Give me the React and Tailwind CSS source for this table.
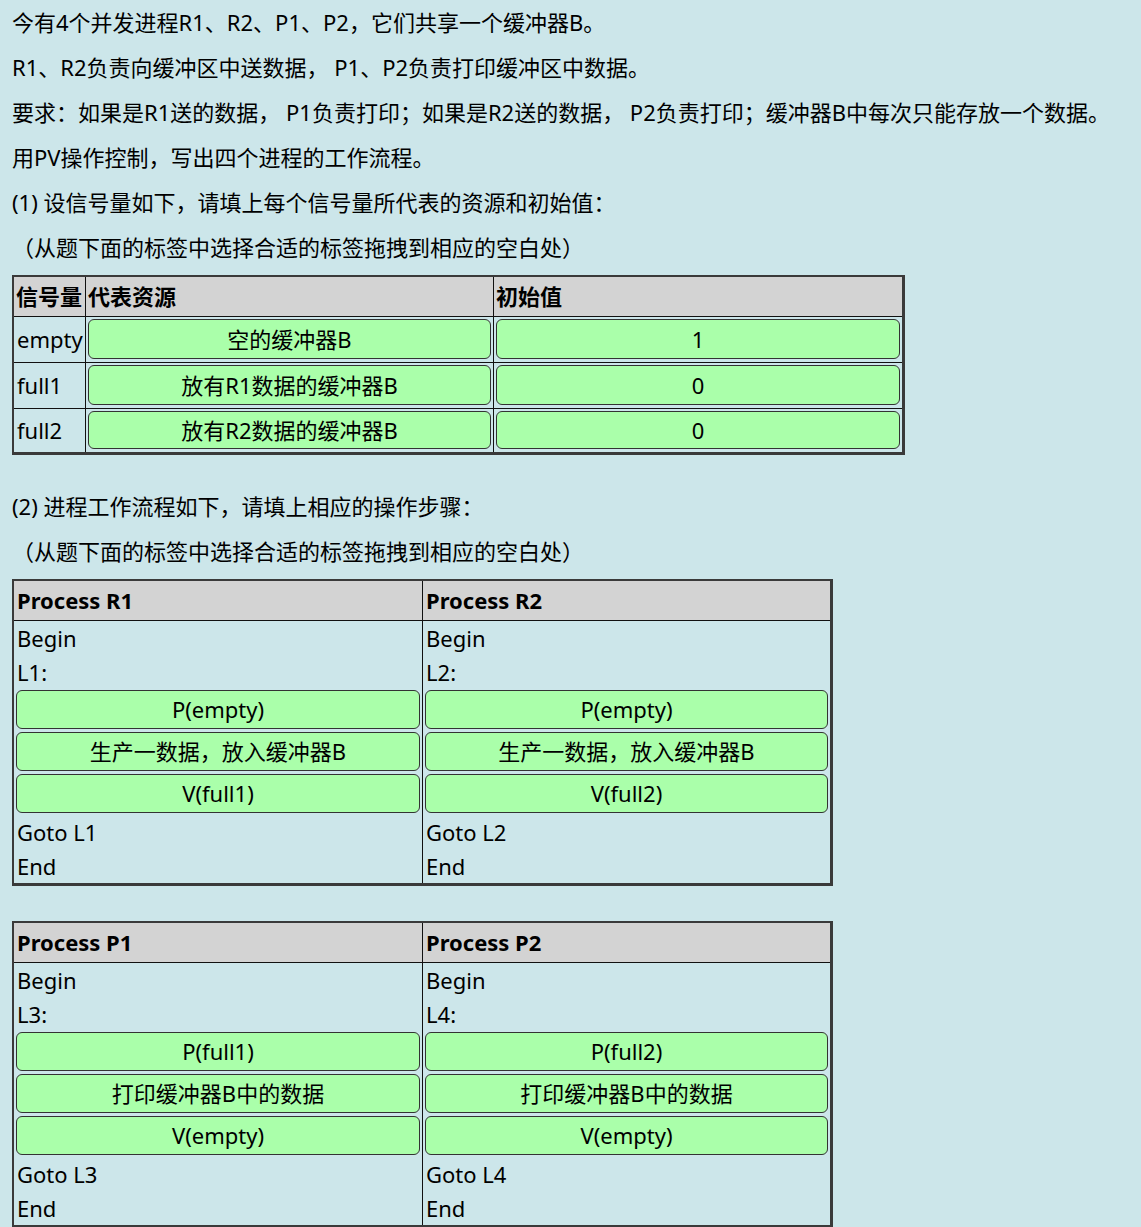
import React from 'react';

const font = { fontFamily: '"Noto Sans", "Noto Sans CJK SC", sans-serif' };

const Box = ({ children }) => (
    <div className="h-full rounded-[6px] border border-[#333] bg-[#aaffaa] flex items-center justify-center">
        {children}
    </div>
);

const Line = ({ children, className = '' }) => (
    <div className={`h-[45px] flex items-center ${className}`}>{children}</div>
);

const semaphores = [
    { name: 'empty', res: '空的缓冲器B', init: '1' },
    { name: 'full1', res: '放有R1数据的缓冲器B', init: '0' },
    { name: 'full2', res: '放有R2数据的缓冲器B', init: '0' },
];

const SemTable = () => (
    <div className="w-[893px] border-t-2 border-l-2 border-r-[3px] border-b-[3px] border-[#3a3a3a]">
        {/* Header */}
        <div className="flex h-[40px] bg-[#d3d3d3] border-b border-[#111] font-bold">
            <div className="w-[72px] border-r border-[#111] flex items-center pl-[2px]">信号量</div>
            <div className="w-[408px] border-r border-[#111] flex items-center pl-[2px]">代表资源</div>
            <div className="flex-1 flex items-center pl-[2px]">初始值</div>
        </div>
        {semaphores.map((s, i) => (
            <div
                key={s.name}
                className={`flex ${i < 2 ? 'h-[46px] border-b border-[#111]' : 'h-[43px]'}`}
            >
                <div className="w-[72px] border-r border-[#111] flex items-center pl-[3px]">{s.name}</div>
                <div className="w-[408px] border-r border-[#111] p-[2px] pb-[3px]">
                    <Box>{s.res}</Box>
                </div>
                <div className="flex-1 p-[2px] pb-[3px]">
                    <Box>{s.init}</Box>
                </div>
            </div>
        ))}
    </div>
);

const ProcCell = ({ label, steps, className = '' }) => (
    <div className={`px-[2px] ${className}`}>
        <div className="h-[34px] flex items-center pl-[1px]">Begin</div>
        <div className="h-[34px] flex items-center pl-[1px]">{label}:</div>
        {steps.map((st) => (
            <div key={st} className="h-[42px] pt-[1px] pb-[2px]">
                <Box>{st}</Box>
            </div>
        ))}
        <div className="h-[34px] flex items-center pl-[1px]">Goto {label}</div>
        <div className="h-[34px] flex items-center pl-[1px]">End</div>
    </div>
);

const ProcTable = ({ left, right }) => (
    <div className="w-[821px] border-t-2 border-l-2 border-r-[3px] border-b-[3px] border-[#3a3a3a]">
        <div className="flex h-[40px] bg-[#d3d3d3] border-b border-[#111] font-bold">
            <div className="w-[409px] border-r border-[#111] flex items-center pl-[3px]">{left.title}</div>
            <div className="flex-1 flex items-center pl-[3px]">{right.title}</div>
        </div>
        <div className="flex">
            <ProcCell label={left.label} steps={left.steps} className="w-[409px] border-r border-[#111]" />
            <ProcCell label={right.label} steps={right.steps} className="flex-1" />
        </div>
    </div>
);

export default function App() {
    return (
        <div className="min-h-screen bg-[#cce6ea] text-black text-[22px] pl-[12px]" style={font}>
            <Line>今有4个并发进程R1、R2、P1、P2，它们共享一个缓冲器B。</Line>
            <Line>R1、R2负责向缓冲区中送数据， P1、P2负责打印缓冲区中数据。</Line>
            <Line>要求：如果是R1送的数据， P1负责打印；如果是R2送的数据， P2负责打印；缓冲器B中每次只能存放一个数据。</Line>
            <Line>用PV操作控制，写出四个进程的工作流程。</Line>
            <Line>(1) 设信号量如下，请填上每个信号量所代表的资源和初始值：</Line>
            <Line>（从题下面的标签中选择合适的标签拖拽到相应的空白处）</Line>
            <div className="mt-[5px]">
                <SemTable />
            </div>
            <Line className="mt-[29px]">(2) 进程工作流程如下，请填上相应的操作步骤：</Line>
            <Line>（从题下面的标签中选择合适的标签拖拽到相应的空白处）</Line>
            <div className="mt-[5px] flex flex-col gap-[35px] pb-[1px]">
                <ProcTable
                    left={{ title: 'Process R1', label: 'L1', steps: ['P(empty)', '生产一数据，放入缓冲器B', 'V(full1)'] }}
                    right={{ title: 'Process R2', label: 'L2', steps: ['P(empty)', '生产一数据，放入缓冲器B', 'V(full2)'] }}
                />
                <ProcTable
                    left={{ title: 'Process P1', label: 'L3', steps: ['P(full1)', '打印缓冲器B中的数据', 'V(empty)'] }}
                    right={{ title: 'Process P2', label: 'L4', steps: ['P(full2)', '打印缓冲器B中的数据', 'V(empty)'] }}
                />
            </div>
        </div>
    );
}
